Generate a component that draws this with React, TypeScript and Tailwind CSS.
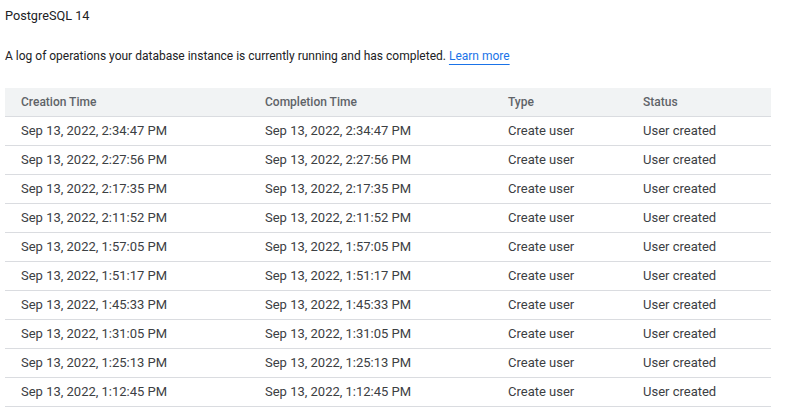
import React from "react";

const times = [
  "2:34:47 PM",
  "2:27:56 PM",
  "2:17:35 PM",
  "2:11:52 PM",
  "1:57:05 PM",
  "1:51:17 PM",
  "1:45:33 PM",
  "1:31:05 PM",
  "1:25:13 PM",
  "1:12:45 PM",
];

export default function App() {
  return (
    <div
      className="bg-white w-[789px] h-[408px] overflow-hidden text-[#202124]"
      style={{ fontFamily: "Roboto, 'Liberation Sans', sans-serif" }}
    >
      <div className="pl-[5px] pt-[7px] text-[12.7px] leading-[18px]">PostgreSQL 14</div>
      <div className="pl-[5px] pt-[22px] text-[12px] leading-[18px]">
        A log of operations your database instance is currently running and has completed.{" "}
        <a className="text-[#1a73e8] underline underline-offset-[4px] decoration-[1px]">Learn more</a>
      </div>
      <div className="ml-[5px] mt-[23px] w-[766px] text-[13px]">
        <div className="flex h-[29px] items-center bg-[#f1f3f4] border-b border-[#dadce0] text-[#5f6368] text-[12px] font-medium">
          <div className="w-[244px] pl-[16px]">Creation Time</div>
          <div className="w-[243px] pl-[16px]">Completion Time</div>
          <div className="w-[135px] pl-[16px]">Type</div>
          <div className="flex-1 pl-[16px]">Status</div>
        </div>
        {times.map((t) => (
          <div key={t} className="flex h-[29px] items-center border-b border-[#dadce0] text-[#3c4043]">
            <div className="w-[244px] pl-[16px]">Sep 13, 2022, {t}</div>
            <div className="w-[243px] pl-[16px]">Sep 13, 2022, {t}</div>
            <div className="w-[135px] pl-[16px]">Create user</div>
            <div className="flex-1 pl-[16px]">User created</div>
          </div>
        ))}
      </div>
    </div>
  );
}
